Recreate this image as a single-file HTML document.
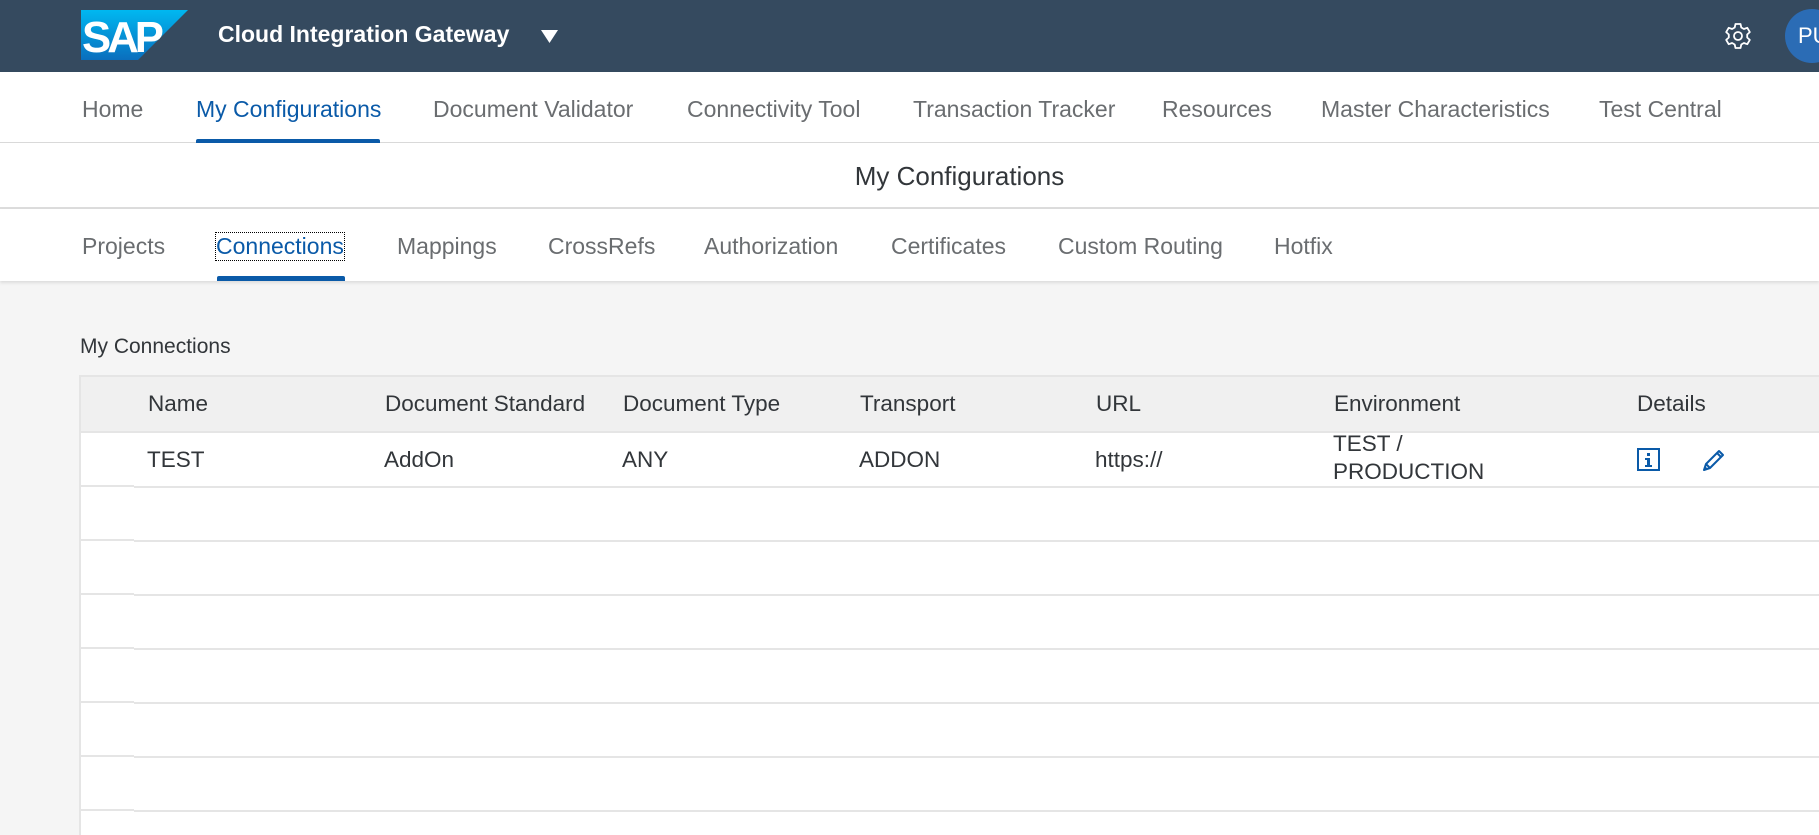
<!DOCTYPE html>
<html><head><meta charset="utf-8"><style>
*{margin:0;padding:0;box-sizing:border-box}
body{width:1819px;height:820px;overflow:hidden;background:#f5f5f5;font-family:"Liberation Sans",sans-serif;position:relative}
.a{position:absolute;white-space:nowrap}
.hdr{position:absolute;left:0;top:0;width:1819px;height:72px;background:#354a5f}
.nav{position:absolute;left:0;top:72px;width:1819px;height:71px;background:#fff;border-bottom:1px solid #d9d9d9;box-shadow:0 2px 3px rgba(0,0,0,.08)}
.nav span,.sub span{position:absolute;font-size:23px;color:#6a6d70}
.ttl{position:absolute;left:0;top:143px;width:1819px;height:66px;background:#fff;border-bottom:2px solid #dcdcdc}
.sub{position:absolute;left:0;top:209px;width:1819px;height:72px;background:#fff;box-shadow:0 2px 3px rgba(0,0,0,.1)}
.th{position:absolute;font-size:22.5px;color:#32363a;top:391px}
.td{position:absolute;font-size:22.5px;color:#32363a}
</style></head><body>
<div class="hdr">
 <svg class="a" style="left:81px;top:10px" width="107" height="50" viewBox="0 0 107 50">
  <defs><linearGradient id="g" x1="0" y1="0" x2="0" y2="1"><stop offset="0" stop-color="#00b8f1"/><stop offset="1" stop-color="#0a6ebd"/></linearGradient></defs>
  <polygon points="0,0 107,0 57,50 0,50" fill="url(#g)"/>
  <text x="1" y="42" font-family="Liberation Sans" font-weight="bold" font-size="44" fill="#fff" letter-spacing="-4" textLength="78" lengthAdjust="spacingAndGlyphs">SAP</text>
 </svg>
 <div class="a" style="left:218px;top:21px;font-size:23px;font-weight:bold;color:#fff">Cloud Integration Gateway</div>
 <svg class="a" style="left:541px;top:30px" width="17" height="13"><polygon points="0,0 17,0 8.5,13" fill="#fff"/></svg>
 <svg class="a" style="left:1724px;top:22px" width="28" height="28" viewBox="0 0 28 28"><path d="M11.5 2h5l.8 3.5 2.6 1.5 3.4-1.2 2.5 4.3-2.6 2.4v3l2.6 2.4-2.5 4.3-3.4-1.2-2.6 1.5-.8 3.5h-5l-.8-3.5-2.6-1.5-3.4 1.2-2.5-4.3 2.6-2.4v-3L2.2 10.1l2.5-4.3 3.4 1.2 2.6-1.5z" fill="none" stroke="#fff" stroke-width="1.8" stroke-linejoin="round"/><circle cx="14" cy="14" r="4" fill="none" stroke="#fff" stroke-width="1.8"/></svg>
 <div class="a" style="left:1785px;top:9px;width:54px;height:54px;border-radius:50%;background:#2b6cb5"></div>
 <div class="a" style="left:1798px;top:23px;font-size:22px;color:#fff">PU</div>
</div>
<div class="nav">
 <span style="left:82px;top:24px">Home</span>
 <span style="left:196px;top:24px;color:#0a5aa8">My Configurations</span>
 <span style="left:433px;top:24px">Document Validator</span>
 <span style="left:687px;top:24px">Connectivity Tool</span>
 <span style="left:913px;top:24px">Transaction Tracker</span>
 <span style="left:1162px;top:24px">Resources</span>
 <span style="left:1321px;top:24px">Master Characteristics</span>
 <span style="left:1599px;top:24px">Test Central</span>
 <div class="a" style="left:196px;top:67px;width:184px;height:4px;background:#0a5aa8;border-radius:2px 2px 0 0"></div>
</div>
<div class="ttl"><div class="a" style="left:0;width:1919px;text-align:center;top:18px;font-size:26px;color:#32363a">My Configurations</div></div>
<div class="sub">
 <span style="left:82px;top:24px">Projects</span>
 <span style="left:216px;top:24px;color:#0a5aa8;outline:1px dotted #000">Connections</span>
 <span style="left:397px;top:24px">Mappings</span>
 <span style="left:548px;top:24px">CrossRefs</span>
 <span style="left:704px;top:24px">Authorization</span>
 <span style="left:891px;top:24px">Certificates</span>
 <span style="left:1058px;top:24px">Custom Routing</span>
 <span style="left:1274px;top:24px">Hotfix</span>
 <div class="a" style="left:217px;top:67px;width:128px;height:5px;background:#0a5aa8;border-radius:2px 2px 0 0"></div>
</div>
<div class="a" style="left:80px;top:335px;font-size:21px;color:#32363a">My Connections</div>
<div class="a" style="left:79px;top:375px;width:1740px;height:460px;background:#fff;border-left:2px solid #e5e5e5;border-top:2px solid #e5e5e5"></div>
<div class="a" style="left:81px;top:377px;width:1738px;height:54px;background:#f0f0f0"></div>
<div class="th" style="left:148px">Name</div>
<div class="th" style="left:385px">Document Standard</div>
<div class="th" style="left:623px">Document Type</div>
<div class="th" style="left:860px">Transport</div>
<div class="th" style="left:1096px">URL</div>
<div class="th" style="left:1334px">Environment</div>
<div class="th" style="left:1637px">Details</div>
<div class="a" style="left:81px;top:431px;width:1738px;height:2px;background:#e5e5e5"></div>
<div class="td" style="left:147px;top:447px">TEST</div>
<div class="td" style="left:384px;top:447px">AddOn</div>
<div class="td" style="left:622px;top:447px">ANY</div>
<div class="td" style="left:859px;top:447px">ADDON</div>
<div class="td" style="left:1095px;top:447px">https://</div>
<div class="td" style="left:1333px;top:430px;line-height:28px">TEST /<br>PRODUCTION</div>
<svg class="a" style="left:1637px;top:448px" width="23" height="23" viewBox="0 0 23 23"><rect x="1" y="1" width="21" height="21" fill="none" stroke="#0a5aa8" stroke-width="2"/><rect x="10" y="5" width="3" height="3" fill="#0a5aa8"/><path d="M8 10h5v7h2v2H8v-2h2v-5H8z" fill="#0a5aa8"/></svg>
<svg class="a" style="left:1702px;top:447px" width="26" height="25" viewBox="0 0 26 25"><path d="M2 23l2-6L17 4l4 4L8 21zM15 6l4 4M4 17l4 4" fill="none" stroke="#0a5aa8" stroke-width="2" stroke-linejoin="round"/><path d="M2 23l1-4 3 3z" fill="#0a5aa8"/></svg>
<div class="a" style="left:134px;top:486px;width:1685px;height:2px;background:#e5e5e5"></div><div class="a" style="left:81px;top:485px;width:53px;height:2px;background:#e5e5e5"></div>
<div class="a" style="left:134px;top:540px;width:1685px;height:2px;background:#e5e5e5"></div><div class="a" style="left:81px;top:539px;width:53px;height:2px;background:#e5e5e5"></div>
<div class="a" style="left:134px;top:594px;width:1685px;height:2px;background:#e5e5e5"></div><div class="a" style="left:81px;top:593px;width:53px;height:2px;background:#e5e5e5"></div>
<div class="a" style="left:134px;top:648px;width:1685px;height:2px;background:#e5e5e5"></div><div class="a" style="left:81px;top:647px;width:53px;height:2px;background:#e5e5e5"></div>
<div class="a" style="left:134px;top:702px;width:1685px;height:2px;background:#e5e5e5"></div><div class="a" style="left:81px;top:701px;width:53px;height:2px;background:#e5e5e5"></div>
<div class="a" style="left:134px;top:756px;width:1685px;height:2px;background:#e5e5e5"></div><div class="a" style="left:81px;top:755px;width:53px;height:2px;background:#e5e5e5"></div>
<div class="a" style="left:134px;top:810px;width:1685px;height:2px;background:#e5e5e5"></div><div class="a" style="left:81px;top:809px;width:53px;height:2px;background:#e5e5e5"></div>
</body></html>
